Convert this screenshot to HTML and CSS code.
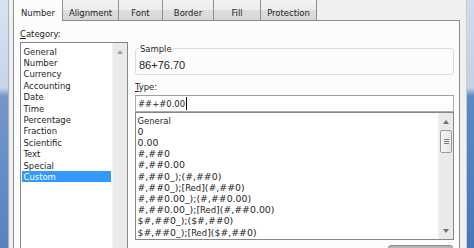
FILE: index.html
```html
<!DOCTYPE html>
<html>
<head>
<meta charset="utf-8">
<link rel="stylesheet" href="styles.css">
</head>
<body>
<div class="screen">
  <div class="frame-left"></div>
  <div class="dialog">
    <div class="tabs">
      <div class="tab tab-active w-number">Number</div>
      <div class="tab w-align">Alignment</div>
      <div class="tab w-font">Font</div>
      <div class="tab w-border">Border</div>
      <div class="tab w-fill">Fill</div>
      <div class="tab w-prot">Protection</div>
    </div>
    <div class="panel">
      <div class="col-left">
        <div class="label"><u>C</u>ategory:</div>
        <div class="listbox cat">
          <ul class="items">
            <li>General</li>
            <li>Number</li>
            <li>Currency</li>
            <li>Accounting</li>
            <li>Date</li>
            <li>Time</li>
            <li>Percentage</li>
            <li>Fraction</li>
            <li>Scientific</li>
            <li>Text</li>
            <li>Special</li>
            <li class="selected">Custom</li>
          </ul>
          <div class="vscroll">
            <div class="sbtn"><span class="arrow-up"></span></div>
          </div>
        </div>
      </div>
      <div class="col-right">
        <fieldset class="sample">
          <legend>Sample</legend>
          <div class="sample-value">86+76.70</div>
        </fieldset>
        <div class="label type-label"><u>T</u>ype:</div>
        <div class="input">##+#0.00<span class="caret"></span></div>
        <div class="listbox fmt">
          <ul class="items">
            <li><span class="alpha">General</span></li>
            <li>0</li>
            <li>0.00</li>
            <li>#,##0</li>
            <li>#,##0.00</li>
            <li>#,##0_);(#,##0)</li>
            <li>#,##0_);[<span class="alpha">Red</span>](#,##0)</li>
            <li>#,##0.00_);(#,##0.00)</li>
            <li>#,##0.00_);[<span class="alpha">Red</span>](#,##0.00)</li>
            <li>$#,##0_);($#,##0)</li>
            <li>$#,##0_);[<span class="alpha">Red</span>]($#,##0)</li>
          </ul>
          <div class="vscroll">
            <div class="sbtn"><span class="arrow-up"></span></div>
            <div class="thumb"><span></span><span></span><span></span></div>
            <div class="track"></div>
            <div class="sbtn"><span class="arrow-down"></span></div>
          </div>
        </div>
        <div class="btn"></div>
      </div>
    </div>
  </div>
  <div class="frame-right"></div>
</div>
</body>
</html>
```
FILE: styles.css
```css
* { box-sizing: border-box; }
html, body { margin: 0; padding: 0; }
body {
  width: 474px;
  height: 248px;
  overflow: hidden;
  background: #f0f0f0;
  font-family: "DejaVu Sans Condensed", "DejaVu Sans", sans-serif;
  font-stretch: condensed;
  font-size: 9.4px;
  color: #1e1e1e;
}
.screen { display: flex; width: 474px; height: 248px; overflow: hidden; }

.frame-left {
  width: 9px;
  flex: none;
  border-right: 1px solid #a9b3bf;
  background: linear-gradient(to bottom, #d9e3ef 0, #c7d5e8 88px, #7497cc 96px, #5a81bf 100%);
}
.frame-right {
  width: 8px;
  flex: none;
  border-left: 1px solid #c3ccd7;
  background: linear-gradient(to bottom, #d2dcea 0, #c3d1e4 88px, #5f87c2 96px, #4b76b5 100%);
}

.dialog {
  flex: 1;
  padding-left: 4px;
  background: #f0f0f0;
  overflow: hidden;
}

.tabs {
  display: flex;
  align-items: flex-start;
  height: 20px;
}
.tab {
  height: 20px;
  padding-top: 6.5px;
  line-height: 12px;
  text-align: center;
  border-left: 1px solid #8e8f8f;
  border-right: 1px solid #8e8f8f;
  background: linear-gradient(to bottom, #f4f4f4 0, #ececec 50%, #dedede 51%, #d6d6d6 100%);
  margin-left: -1px;
}
.tab-active {
  height: 21px;
  margin-left: 0;
  background: #fcfcfc;
  position: relative;
  z-index: 1;
}
.w-number { width: 50px; }
.w-align { width: 57px; }
.w-font { width: 45px; }
.w-border { width: 52px; }
.w-fill { width: 48px; }
.w-prot { width: 57px; }

.panel {
  width: 447px;
  height: 228px;
  overflow: hidden;
  border: 1px solid #898c95;
  border-bottom: none;
  background: #fcfcfc;
  display: grid;
  grid-template-columns: 108px 319px;
  column-gap: 7px;
  align-items: start;
  padding: 7px 5px 0 6px;
}

.label { line-height: 12px; height: 12px; margin-bottom: 2px; }

.listbox {
  display: flex;
  border: 1px solid #828790;
  background: #ffffff;
}
.items {
  list-style: none;
  margin: 0;
  flex: 1;
  min-width: 0;
  white-space: nowrap;
  overflow: hidden;
}
.cat { height: 207px; }
.cat .items { padding: 2.5px 1px 0 1px; line-height: 11.4px; }
.cat li { padding-left: 1.5px; }
.cat li.selected { background: #3399ff; color: #ffffff; }

.fmt { height: 128px; }
.fmt .items {
  padding: 1.5px 0 0 1.5px;
  line-height: 11.2px;
  font-family: "DejaVu Sans", sans-serif;
  font-stretch: normal;
}
.fmt .alpha {
  font-family: "DejaVu Sans Condensed", "DejaVu Sans", sans-serif;
  font-stretch: condensed;
}

.vscroll {
  width: 15px;
  flex: none;
  display: flex;
  flex-direction: column;
  background: #eaeaea;
  border-left: 1px solid #f3f3f3;
}
.sbtn {
  height: 17px;
  flex: none;
  display: flex;
  align-items: center;
  justify-content: center;
}
.arrow-up {
  width: 0; height: 0;
  border-left: 3.5px solid transparent;
  border-right: 3.5px solid transparent;
  border-bottom: 4px solid #6f6f6f;
}
.arrow-down {
  width: 0; height: 0;
  border-left: 3.5px solid transparent;
  border-right: 3.5px solid transparent;
  border-top: 4px solid #6f6f6f;
}
.cat .arrow-up { border-bottom-color: #a3a3a3; }
.thumb {
  height: 23px;
  flex: none;
  margin: 0 1px;
  border: 1px solid #9b9b9b;
  border-radius: 2px;
  background: linear-gradient(to right, #f6f6f6, #e6e6e6);
  display: flex;
  flex-direction: column;
  align-items: center;
  justify-content: center;
  gap: 1px;
}
.thumb span { display: block; width: 5px; height: 1px; background: #7b7b7b; }
.track { flex: 1; }

.sample {
  margin: 15px 0 0 0;
  padding: 5px 3px 3px 3px;
  border: 1px solid #d5dfe5;
  border-radius: 3px;
  min-inline-size: 0;
}
.sample legend { padding: 0 1px; line-height: 11px; }
.sample-value {
  font-family: "Liberation Sans", Arial, sans-serif;
  font-size: 11px;
  line-height: 12px;
}

.type-label { margin-top: 6px; }

.input {
  height: 17px;
  border: 1px solid #abadb3;
  border-top-color: #9ea1a8;
  background: #ffffff;
  padding: 0 2px;
  line-height: 15px;
}
.caret {
  display: inline-block;
  width: 1px;
  height: 13px;
  background: #000000;
  vertical-align: -3px;
  margin-left: 1px;
}

.btn {
  width: 65px;
  height: 22px;
  margin: 5px 1px 0 auto;
  border: 1px solid #8a8a8a;
  border-radius: 3px;
  background: linear-gradient(to bottom, #b4b4b4, #dcdcdc);
}
```
